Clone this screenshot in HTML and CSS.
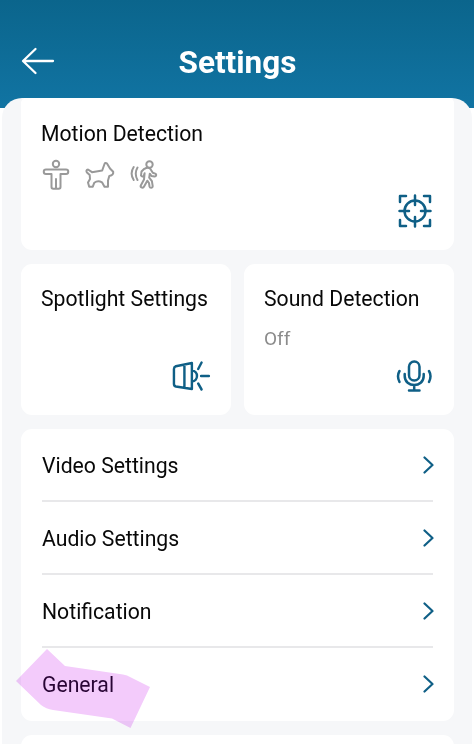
FILE: index.html
```html
<!DOCTYPE html>
<html lang="en">
<head>
<meta charset="utf-8">
<title>Settings</title>
<link rel="stylesheet" href="styles.css">
</head>
<body>
<div class="screen">
  <header class="header">
    <svg class="back" width="34" height="28" viewBox="0 0 34 28"><path d="M14.500 2 2 14l12.500 12M2.500 14H32"/></svg>
    <h1 class="title">Settings</h1>
  </header>
  <main class="panel">
    <section class="card motion">
      <h2 class="label">Motion Detection</h2>
      <div class="modes">
        <svg width="28" height="32" viewBox="0 0 28 32"><circle cx="14" cy="5" r="3.200"/><path d="M9.500 15H4a2 2 0 0 1 0-4.500h20a2 2 0 0 1 0 4.500h-5.500v13a1.800 1.800 0 0 1-1.800 1.800h-5.400A1.800 1.800 0 0 1 9.500 28zM14 20v9"/></svg>
        <svg width="30" height="32" viewBox="0 0 30 32"><path d="M3 10.500c-1.700 0-2 1.800-1 3L4.700 16l.3 4-2 3.500 1.200 4.200h3.600l1.500-4c2-1.500 5.500-1.600 7.700-.4l2.500 4.400H23v-6.200l1.300-4.500c2.700-.5 4.300-2 3.900-4.200L25 9.500 22 4.500c-1.200-1-2.200-.4-2.500.5l-2.300 6.500L7 13.200z"/></svg>
        <svg width="30" height="32" viewBox="0 0 30 32"><circle cx="19.500" cy="5.500" r="3.200"/><path d="M14.300 9.800 11.500 12.500l-.5 4q1.200 1.800 2.800.3l.8-2.500-.6 6.300-3.200 5.800c-.8 1.700 1.600 3.200 3 1.500l3.500-6.200 1.700 2.300.5 3.500c.5 2 3.300 1.700 3.200-.4l-.8-4.900-2.700-3.500.6-4 1.700 2.300 3 .5c1.900.1 2.200-2.300.7-2.900l-2.400-.8-2.400-3.800c-1.100-1.600-3.800-1.800-5.600-.2zM7.500 8.500Q4 14.500 7.500 21M3.700 8Q-.5 14.500 3.700 21"/></svg>
      </div>
      <svg class="feature" width="34" height="34" viewBox="0 0 34 34"><path d="M2 8V2h6M26 2h6v6M32 26v6h-6M8 32H2v-6M1.500 17H11M23 17h9.500M17 1.500V11M17 23v9.500"/><circle cx="17" cy="17" r="10.500"/></svg>
    </section>
    <div class="pair">
      <section class="card tile">
        <h2 class="label">Spotlight Settings</h2>
        <svg class="feature spotlight" width="40" height="34" viewBox="0 0 40 34"><path d="M20.500 4 4 7.200Q2 8 2 10v15q0 2 2 2.500L20.500 30zM12.800 5.700v22.800M20.500 11.500c7 .5 7 10.500 0 11M27 10l3.500-6.500M30 17h8M27 24.500l3.500 6"/></svg>
      </section>
      <section class="card tile">
        <h2 class="label">Sound Detection</h2>
        <p class="state">Off</p>
        <svg class="feature" width="36" height="34" viewBox="0 0 36 34"><rect x="13" y="2.500" width="10.500" height="19" rx="5.200"/><path d="M8.700 15v2c0 12 19 12 19 0v-2M18.200 26v5.500M13 31.500h10.500M3.500 12Q.5 17 3.500 23M33 12q3 5 0 11"/></svg>
      </section>
    </div>
    <nav class="card list">
      <a class="row">Video Settings<svg class="chevron" width="12" height="18" viewBox="0 0 12 18"><path d="M2.500 1.500 10.500 9l-8 7.500"/></svg></a>
      <a class="row">Audio Settings<svg class="chevron" width="12" height="18" viewBox="0 0 12 18"><path d="M2.500 1.500 10.500 9l-8 7.500"/></svg></a>
      <a class="row">Notification<svg class="chevron" width="12" height="18" viewBox="0 0 12 18"><path d="M2.500 1.500 10.500 9l-8 7.500"/></svg></a>
      <a class="row marked">General<svg class="chevron" width="12" height="18" viewBox="0 0 12 18"><path d="M2.500 1.500 10.500 9l-8 7.500"/></svg></a>
      <svg class="marker" width="136" height="80" viewBox="0 0 136 80"><path d="M1 33 32 1l18 17 58 8.500q4 .5 8 3l19 9.500-19.500 41L97 70.500l-59-8.500q-7-1-12-5z"/></svg>
    </nav>
    <section class="card next"></section>
  </main>
</div>
</body>
</html>
```

FILE: styles.css
```css
* { box-sizing: border-box; }
body {
  margin: 0;
  background: #fff;
  font-family: Roboto, "Liberation Sans", sans-serif;
  color: #080808;
}
.screen {
  height: 746px;
  overflow: hidden;
  background: linear-gradient(#0b658c, #1174a3 108px, #fff 108px);
}
.header {
  position: relative;
  height: 98px;
  padding-top: 27px;
}
svg {
  display: block;
  fill: none;
  stroke: #0f5f86;
  stroke-width: 2.500;
  stroke-linecap: round;
  stroke-linejoin: round;
}
.back {
  position: absolute;
  left: 21px;
  top: 47px;
  stroke: #fff;
  stroke-width: 2.300;
}
.title {
  margin: 0;
  padding-left: 1px;
  text-align: center;
  font-size: 31.500px;
  line-height: 72px;
  font-weight: 700;
  color: #fff;
}
.panel {
  height: 646px;
  margin: 0 2px;
  padding: 0 18px 0 19px;
  display: flex;
  flex-direction: column;
  gap: 14px;
  overflow: hidden;
  border-radius: 20px 20px 0 0;
  background: #f6f7f9;
}
.card {
  position: relative;
  flex-shrink: 0;
  border-radius: 11px;
  background: #fff;
}
.motion {
  height: 152px;
  padding: 22px 20px;
  border-radius: 5px 5px 11px 11px;
}
.label {
  margin: 0;
  font-size: 21.200px;
  line-height: 27px;
  font-weight: 400;
  white-space: nowrap;
}
.modes {
  display: flex;
  gap: 15px;
  margin: 12px 0 0 1px;
}
.modes svg { stroke: #999; stroke-width: 2; }
.feature {
  position: absolute;
  right: 22px;
  bottom: 22px;
}
.spotlight { right: 20px; }
.spotlight path { transform: translateX(1px) scaleX(0.970); }
.pair {
  display: grid;
  grid-template-columns: 210px 210px;
  gap: 13px;
}
.tile {
  height: 151px;
  padding: 21px 20px;
}
.state {
  margin: 15px 0 0;
  font-size: 19px;
  line-height: 24px;
  color: #8b8b8b;
}
.list {
  height: 292px;
  padding: 0 21px;
}
.row {
  display: flex;
  align-items: center;
  justify-content: space-between;
  height: 73px;
  padding-top: 1px;
  border-bottom: 2px solid #e8e8ea;
  font-size: 21.200px;
}
.row:nth-child(4) { border-bottom-color: transparent; }
.marked { color: #2b0636; }
.chevron { stroke-width: 2.200; margin-right: -1px; }
.marker {
  position: absolute;
  left: -6px;
  top: 219px;
  fill: #f3cbfb;
  stroke: none;
  mix-blend-mode: multiply;
}
.next { height: 80px; }
```
